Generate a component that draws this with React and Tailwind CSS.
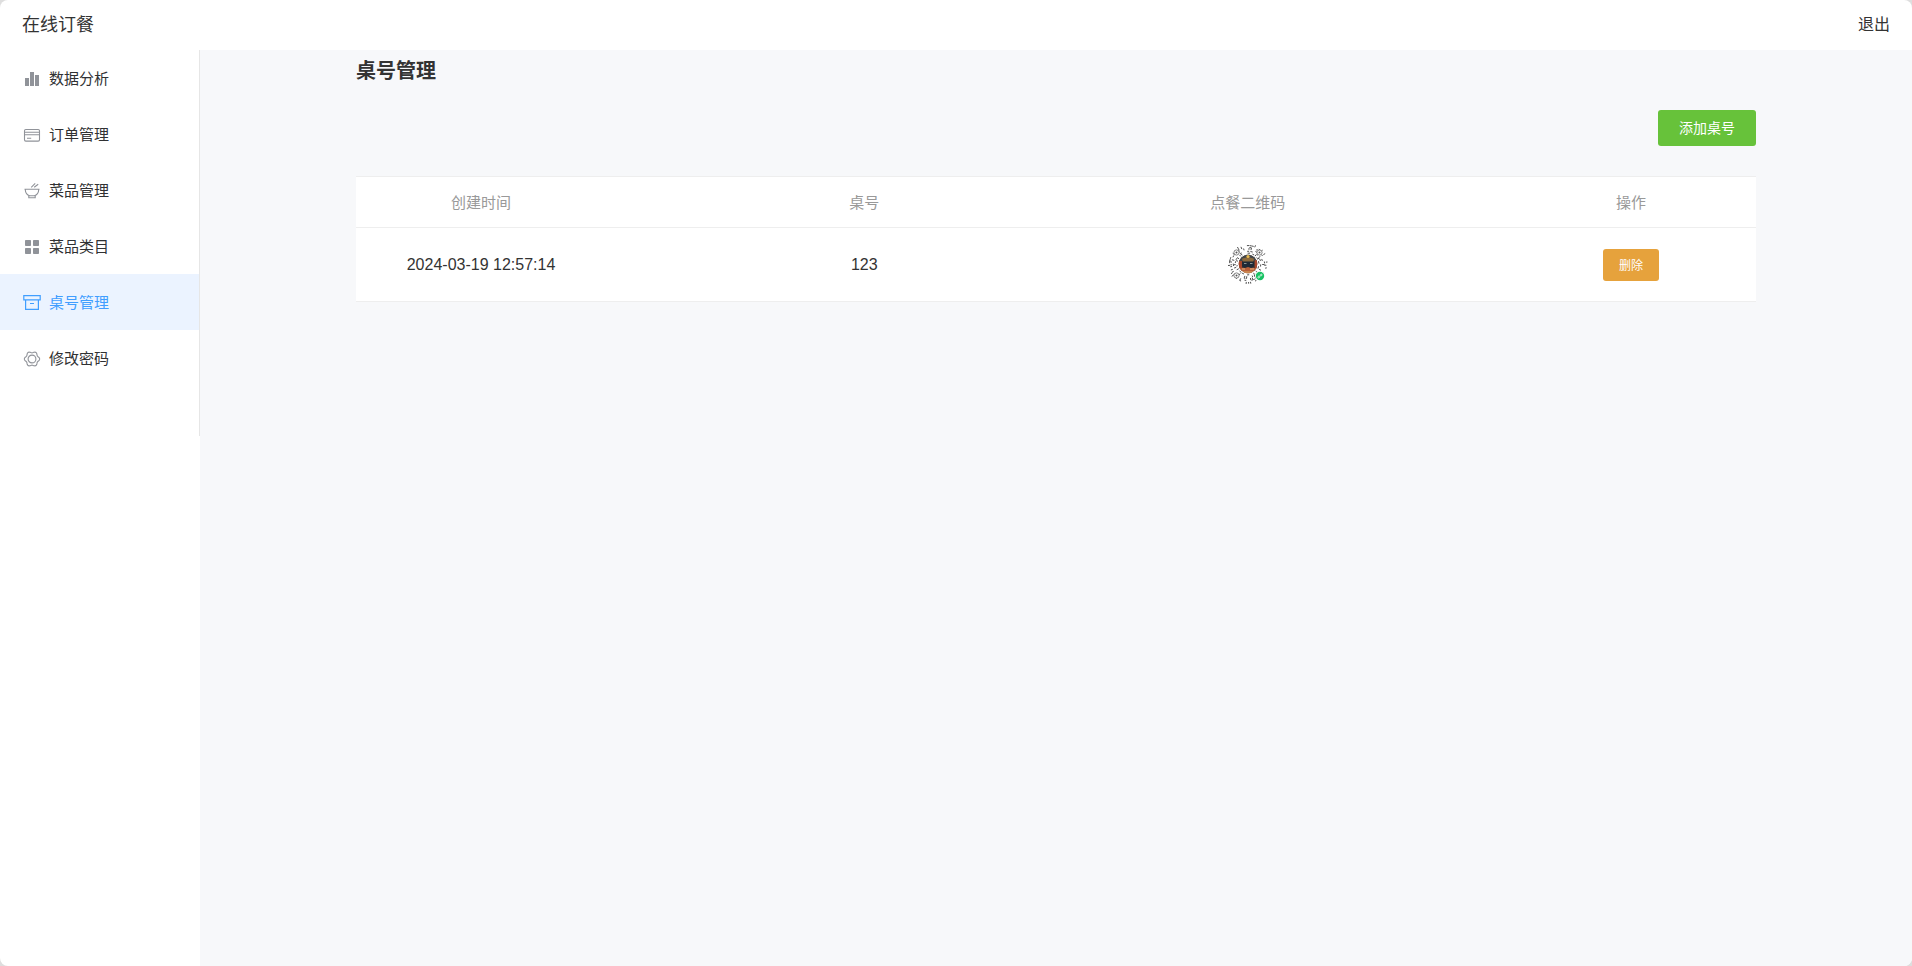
import React from "react";

const iconProps = {
  width: 18,
  height: 18,
  viewBox: "0 0 18 18",
  fill: "none",
  stroke: "currentColor",
  strokeWidth: 1.1,
  "aria-hidden": true,
};

function DataIcon() {
  return (
    <svg {...iconProps} stroke="none" fill="currentColor">
      <rect x="2" y="8" width="4" height="8" />
      <rect x="7" y="2" width="4" height="14" />
      <rect x="12" y="5" width="4" height="11" />
    </svg>
  );
}

function CardIcon() {
  return (
    <svg {...iconProps}>
      <rect x="1.5" y="3.5" width="15" height="11.6" rx="1.3" />
      <path d="M1.5 6.2h15M1.5 8.7h15M4 12.2h4.2" />
    </svg>
  );
}

function DishIcon() {
  return (
    <svg {...iconProps}>
      <path d="M1.500 7.200h15M2.200 7.200c.2 3.300 1.900 5.900 4.600 6.600h4.400c2.700-.7 4.400-3.300 4.600-6.600M5.800 13.600v2.100h6.400v-2.100M8.200 5.300l4-3.900M11.200 5.300l4-3" />
    </svg>
  );
}

function MenuIcon() {
  return (
    <svg {...iconProps} stroke="none" fill="currentColor">
      <rect x="2" y="2" width="6" height="6" rx=".8" />
      <rect x="10" y="2" width="6" height="6" rx=".8" />
      <rect x="2" y="10" width="6" height="6" rx=".8" />
      <rect x="10" y="10" width="6" height="6" rx=".8" />
    </svg>
  );
}

function BoxIcon() {
  return (
    <svg {...iconProps} strokeWidth="1.200">
      <path d="M.8 1.600h16.400v4.200H.8zM2.600 5.800v9.600h12.800V5.800M7 9.500h4" />
    </svg>
  );
}

// Six-lobed outline of the gear.
const gearPoints = Array.from({ length: 72 }, (_, i) => {
  const angle = (i * Math.PI) / 36;
  const radius = 6.9 + 0.75 * Math.cos(6 * angle);
  return `${9 + radius * Math.cos(angle)},${9 + radius * Math.sin(angle)}`;
}).join(" ");

function SettingIcon() {
  return (
    <svg {...iconProps} strokeLinejoin="round">
      <polygon points={gearPoints} />
      <circle cx="9" cy="9" r="3.900" />
    </svg>
  );
}

const menu = [
  { label: "数据分析", Icon: DataIcon },
  { label: "订单管理", Icon: CardIcon },
  { label: "菜品管理", Icon: DishIcon },
  { label: "菜品类目", Icon: MenuIcon },
  { label: "桌号管理", Icon: BoxIcon, active: true },
  { label: "修改密码", Icon: SettingIcon },
];

// Specks of the round code: short strokes on spokes, some radial and some crossing.
const specks = [];
let seed = 17;
function next() {
  seed = (seed * 16807) % 2147483647;
  return seed / 2147483647;
}
for (let ring = 0; ring < 5; ring += 1) {
  const count = 26 + ring * 5;
  for (let i = 0; i < count; i += 1) {
    const angle = ((i + next() * 0.5) * Math.PI * 2) / count;
    const radius = 10.8 + ring * 1.9;
    const turn = next() > 0.6 ? Math.PI / 2 : 0;
    const length = 0.6 + next() * 1.2;
    if (next() < 0.58) {
      const x = 20 + Math.cos(angle) * radius;
      const y = 20 + Math.sin(angle) * radius;
      specks.push([x, y, x + Math.cos(angle + turn) * length, y + Math.sin(angle + turn) * length]);
    }
  }
}

function QrCode() {
  return (
    <svg width="40" height="40" viewBox="0 0 40 40" role="img" aria-label="点餐二维码">
      <defs>
        <clipPath id="avatar">
          <circle cx="20" cy="20" r="9.300" />
        </clipPath>
      </defs>
      <g stroke="#3c3c3c" strokeWidth=".9" strokeLinecap="round">
        {specks.map(([x1, y1, x2, y2], i) => (
          <line key={i} x1={x1} y1={y1} x2={x2} y2={y2} />
        ))}
      </g>
      <g fill="#fff" stroke="#777" strokeWidth=".9">
        <circle cx="8.500" cy="8.500" r="2.600" />
        <circle cx="31.500" cy="8.500" r="2.600" />
        <circle cx="8.500" cy="31.500" r="2.600" />
      </g>
      <g fill="#555">
        <circle cx="8.500" cy="8.500" r="1" />
        <circle cx="31.500" cy="8.500" r="1" />
        <circle cx="8.500" cy="31.500" r="1" />
      </g>
      <g clipPath="url(#avatar)">
        <rect x="10" y="10" width="20" height="20" fill="#5a3a2e" />
        <path d="M10 10h20v7H10z" fill="#40464a" />
        <path d="M14 15c2-2 10-2 12 0l-1 3H15z" fill="#8d6a3c" />
        <circle cx="20" cy="12.500" r="1.600" fill="#e8b94e" />
        <path d="M10 17h4v7h-4zM27 16h3v8h-3z" fill="#a8482c" />
        <path d="M14 17.500h12v5l-3 1.500h-6l-3-1.500z" fill="#1f2a36" />
        <path d="M16 19.500h2.500M22 19.500h2.500" stroke="#8d9694" strokeWidth="1" />
        <path d="M11 24h6l3-1 3 1h6v3H11z" fill="#b9603a" />
        <path d="M14 25h3M22 25h4" stroke="#e8bd88" strokeWidth=".9" />
        <path d="M12 27h16v3H12z" fill="#c9854f" />
      </g>
      <circle cx="32" cy="32" r="5" fill="#fff" />
      <circle cx="32" cy="32" r="4.200" fill="#18c163" />
      <path
        d="M30.900 32.200c-1.300.1-1.400 1.700-.2 1.700 1.700 0 .9-3.600 2.500-3.700 1.300 0 1.200 1.500 0 1.600"
        fill="none"
        stroke="#fff"
        strokeWidth=".8"
      />
    </svg>
  );
}

const columns = ["创建时间", "桌号", "点餐二维码", "操作"];

export default function App() {
  return (
    <div className="bg-[#dedede]">
      <div className="flex min-h-screen flex-col overflow-hidden rounded-lg bg-white font-['Liberation_Sans','Noto_Sans_CJK_SC',sans-serif] text-base text-[#333333]">
        <header className="flex h-[50px] items-center justify-between px-[22px]">
          <span className="text-lg">在线订餐</span>
          <button type="button" className="text-base">退出</button>
        </header>

        <div className="flex flex-1">
          <aside className="w-[200px] shrink-0">
            <nav className="border-r border-[#e6e6e6] pb-[50px]">
              <ul>
                {menu.map(({ label, Icon, active }) => (
                  <li key={label}>
                    <a
                      href="#"
                      aria-current={active ? "page" : undefined}
                      className={
                        active
                          ? "flex h-14 items-center gap-2 bg-[#ebf3ff] pt-0.5 pl-[23px] text-[15px] text-[#409eff]"
                          : "flex h-14 items-center gap-2 pt-0.5 pl-[23px] text-[15px] text-[#303133]"
                      }
                    >
                      <span className={active ? "" : "text-[#909399]"}>
                        <Icon />
                      </span>
                      {label}
                    </a>
                  </li>
                ))}
              </ul>
            </nav>
          </aside>

          <main className="flex-1 bg-[#f7f8fa] px-8">
            <div className="mx-auto max-w-[1400px]">
              <h1 className="pt-1.5 text-xl leading-[30px] font-bold">桌号管理</h1>
              <div className="flex justify-end pt-6 pb-[30px]">
                <button
                  type="button"
                  className="h-9 rounded-[3px] bg-[#67c23a] px-[21px] text-sm text-white"
                >
                  添加桌号
                </button>
              </div>

              <table className="block w-full bg-white text-center">
                <thead className="block">
                  <tr className="flex h-[52px] items-center justify-between border-y border-[#eeeeee]">
                    {columns.map((name) => (
                      <th key={name} scope="col" className="w-[250px] pt-0.5 text-[15px] font-normal text-[#999999]">
                        {name}
                      </th>
                    ))}
                  </tr>
                </thead>
                <tbody className="block">
                  <tr className="flex h-[74px] items-center justify-between border-b border-[#eeeeee]">
                    <td className="w-[250px]">2024-03-19 12:57:14</td>
                    <td className="w-[250px]">123</td>
                    <td className="flex w-[250px] justify-center pb-0.5">
                      <QrCode />
                    </td>
                    <td className="flex w-[250px] justify-center">
                      <button
                        type="button"
                        className="h-8 rounded-[3px] bg-[#e6a23c] px-4 pt-0.5 text-xs text-white"
                      >
                        删除
                      </button>
                    </td>
                  </tr>
                </tbody>
              </table>
            </div>
          </main>
        </div>
      </div>
    </div>
  );
}
